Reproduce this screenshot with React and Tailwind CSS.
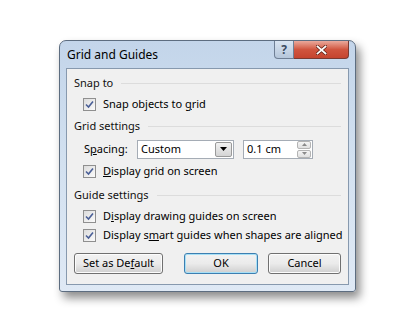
import React from "react";

function Check({ checked = true }) {
  return (
    <span className="w-[13px] h-[13px] border border-[#8f8f8f] bg-gradient-to-br from-[#dcdcdc] to-[#fbfbfb] flex items-center justify-center shrink-0">
      {checked && (
        <svg width="9" height="9" viewBox="0 0 9 9">
          <path d="M1 4.5 L3.5 7 L8 1.5" fill="none" stroke="#4a5f97" strokeWidth="1.6" />
        </svg>
      )}
    </span>
  );
}

function Group({ title }) {
  return (
    <div className="flex items-center gap-2 h-[18px]">
      <span className="text-[#111]">{title}</span>
      <span className="flex-1 h-px bg-[#dcdcdc]" />
    </div>
  );
}

function CheckRow({ children, className = "" }) {
  return (
    <div className={`flex items-center gap-[7px] pl-[9px] h-[19px] whitespace-nowrap ${className}`}>
      <Check />
      <span>{children}</span>
    </div>
  );
}

function Button({ children, primary, className = "" }) {
  return (
    <button
      className={`h-[21px] rounded-[3px] border ${
        primary ? "border-[#3c7fb1] shadow-[inset_0_0_0_1px_#a8e0f6]" : "border-[#707070] shadow-[inset_0_0_0_1px_#fcfcfc]"
      } bg-gradient-to-b from-[#f2f2f2] via-[#ebebeb] to-[#cfcfcf] text-black ${className}`}
    >
      {children}
    </button>
  );
}

export default function App() {
  return (
    <div
      className="w-[412px] h-[329px] bg-white pt-[40px] pl-[59px]"
      style={{ fontFamily: '"Noto Sans", "Open Sans", sans-serif' }}
    >
      <div className="w-[297px] h-[252px] rounded-t-[7px] rounded-b-[3px] border border-[#5d6d80] bg-gradient-to-b from-[#c3d5ea] via-[#d3e1f0] to-[#dfe9f5] shadow-[4px_6px_10px_rgba(0,0,0,0.45)] flex flex-col">
        <div className="h-[27px] flex items-start justify-between">
          <span className="pl-[7px] pt-[5px] text-[12px] text-black">Grid and Guides</span>
          <div className="flex mr-[6px]">
            <span className="w-[20px] h-[18px] border border-[#6f7f95] border-t-0 rounded-bl-[4px] bg-gradient-to-b from-[#d9e4f1] to-[#b5c6da] flex items-center justify-center text-[12px] font-bold text-[#3b4a5f]">
              ?
            </span>
            <span className="w-[55px] h-[18px] border border-[#7a3a32] border-t-0 border-l-0 rounded-br-[4px] bg-gradient-to-b from-[#e9a99c] via-[#d0553f] to-[#c5442f] flex items-center justify-center">
              <svg width="11" height="10" viewBox="0 0 11 10">
                <path d="M1.5 1.5 L9.5 8.5 M9.5 1.5 L1.5 8.5" stroke="#5a1d12" strokeWidth="3.2" strokeLinecap="square" />
                <path d="M1.5 1.5 L9.5 8.5 M9.5 1.5 L1.5 8.5" stroke="#ffffff" strokeWidth="1.8" strokeLinecap="square" />
              </svg>
            </span>
          </div>
        </div>
        <div className="mx-[6px] mb-[6px] flex-1 border border-[#8799ae] bg-[#f0f0f0] px-[7px] pt-[5px] text-[11px] text-black">
          <Group title="Snap to" />
          <CheckRow className="mt-[3px]">
            Snap objects to <u>g</u>rid
          </CheckRow>
          <div className="mt-[3px]">
            <Group title="Grid settings" />
          </div>
          <div className="flex items-center pl-[10px] mt-[4px] h-[20px]">
            <span className="w-[53px]">
              S<u>p</u>acing:
            </span>
            <div className="w-[97px] h-[19px] border border-[#a5acb5] bg-white flex items-center justify-between pl-[3px]">
              <span>Custom</span>
              <span className="w-[17px] h-[15px] mr-[1px] border border-[#9a9a9a] rounded-[2px] bg-gradient-to-b from-[#f2f2f2] to-[#d4d4d4] flex items-center justify-center">
                <svg width="7" height="4" viewBox="0 0 7 4">
                  <path d="M0 0 L7 0 L3.5 4 Z" fill="#000" />
                </svg>
              </span>
            </div>
            <div className="ml-[9px] w-[70px] h-[19px] border border-[#a5acb5] bg-white flex items-center justify-between pl-[3px]">
              <span>0.1 cm</span>
              <span className="w-[15px] h-[17px] flex flex-col gap-px pr-px">
                <span className="flex-1 border border-[#b4b4b4] rounded-[2px] bg-gradient-to-b from-[#f4f4f4] to-[#e0e0e0] flex items-center justify-center">
                  <svg width="5" height="3" viewBox="0 0 5 3"><path d="M0 3 L5 3 L2.5 0 Z" fill="#8a8a8a" /></svg>
                </span>
                <span className="flex-1 border border-[#b4b4b4] rounded-[2px] bg-gradient-to-b from-[#f4f4f4] to-[#e0e0e0] flex items-center justify-center">
                  <svg width="5" height="3" viewBox="0 0 5 3"><path d="M0 0 L5 0 L2.5 3 Z" fill="#8a8a8a" /></svg>
                </span>
              </span>
            </div>
          </div>
          <CheckRow className="mt-[3px]">
            <u>D</u>isplay grid on screen
          </CheckRow>
          <div className="mt-[5px]">
            <Group title="Guide settings" />
          </div>
          <CheckRow className="mt-[3px]">
            D<u>i</u>splay drawing guides on screen
          </CheckRow>
          <CheckRow>
            Display s<u>m</u>art guides when shapes are aligned
          </CheckRow>
          <div className="flex items-center mt-[8px]">
            <Button className="w-[89px]">
              Set as De<u>f</u>ault
            </Button>
            <Button primary className="w-[74px] ml-[21px]">
              OK
            </Button>
            <Button className="w-[73px] ml-[10px]">Cancel</Button>
          </div>
        </div>
      </div>
    </div>
  );
}
